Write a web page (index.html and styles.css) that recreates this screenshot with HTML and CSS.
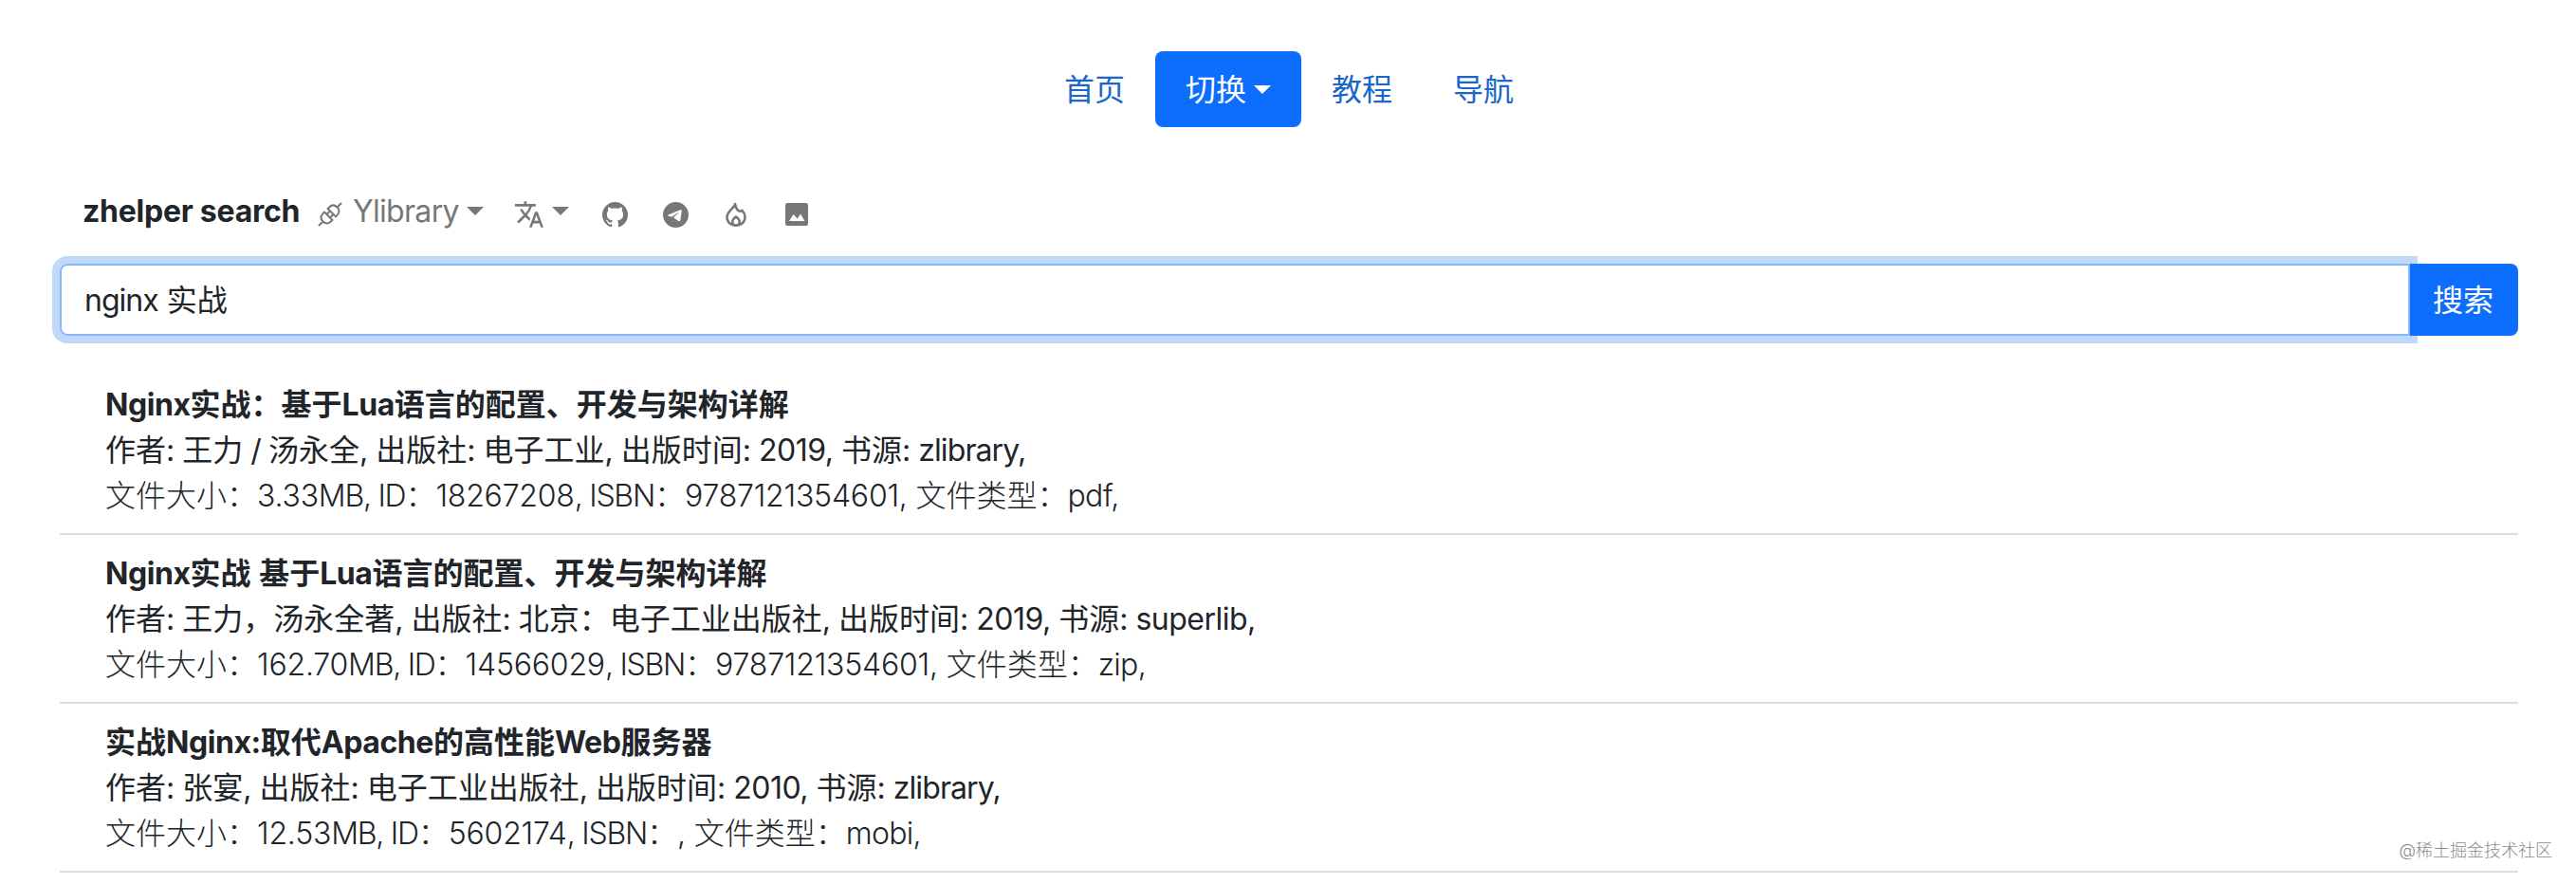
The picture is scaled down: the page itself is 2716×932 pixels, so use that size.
FILE: index.html
```html
<!DOCTYPE html>
<html lang="zh-CN">
<head>
<meta charset="utf-8">
<title>zhelper search</title>
<link rel="stylesheet" href="styles.css">
</head>
<body>
<nav class="pills">
  <a class="pill">首页</a>
  <a class="pill active">切换<i class="caret"></i></a>
  <a class="pill">教程</a>
  <a class="pill">导航</a>
</nav>
<main class="container">
  <header class="toolbar">
    <span class="brand">zhelper search</span>
    <a class="tool source">
      <svg class="icon plug" viewBox="0 0 26 26" fill="none" stroke="currentColor" stroke-width="2"><path d="M1 25l4.500-4.500M20.500 5.500L25 1M5.500 20.500c-3-3-2.200-6.200 0-8.400l1.500-1.500 8.400 8.400-1.500 1.500c-2.200 2.200-5.400 3-8.400 0zM20.500 5.500c-3-3-6.200-2.200-8.400 0l-1.500 1.500 8.400 8.400 1.500-1.500c2.200-2.200 3-5.400 0-8.400zM9.500 13l3-3M13 16.500l3-3"/></svg>
      <span class="source-name">Ylibrary</span><i class="caret"></i>
    </a>
    <a class="tool lang">
      <svg class="icon translate" viewBox="1 2 22 20" fill="currentColor"><path d="M12.870 15.070l-2.540-2.510.03-.03A17.520 17.520 0 0 0 14.070 6H17V4h-7V2H8v2H1v1.990h11.170C11.500 7.920 10.440 9.750 9 11.350 8.070 10.320 7.300 9.190 6.690 8h-2c.73 1.630 1.730 3.170 2.980 4.560l-5.090 5.020L4 19l5-5 3.110 3.110.76-2.040zM18.500 10h-2L12 22h2l1.120-3h4.750L21 22h2l-4.500-12zm-2.620 7l1.620-4.330L19.120 17h-3.240z"/></svg>
      <i class="caret"></i>
    </a>
    <a class="tool"><svg class="icon" viewBox="2 2 20 20" fill="currentColor"><path d="M12 2A10 10 0 0 0 2 12c0 4.420 2.870 8.170 6.840 9.500.5.080.66-.23.66-.5v-1.690c-2.770.6-3.360-1.340-3.360-1.340-.46-1.160-1.110-1.470-1.110-1.470-.91-.62.07-.6.07-.6 1 .07 1.530 1.030 1.530 1.030.87 1.520 2.340 1.070 2.910.83.090-.65.35-1.090.63-1.340-2.220-.25-4.550-1.110-4.550-4.920 0-1.110.38-2 1.030-2.710-.1-.25-.45-1.290.1-2.640 0 0 .84-.27 2.750 1.020.79-.22 1.650-.33 2.500-.33s1.710.11 2.500.33c1.910-1.290 2.750-1.020 2.750-1.020.55 1.350.2 2.390.1 2.640.65.710 1.030 1.600 1.030 2.710 0 3.820-2.340 4.660-4.570 4.910.36.31.69.92.69 1.850V21c0 .27.16.59.67.5C19.140 20.160 22 16.420 22 12A10 10 0 0 0 12 2z"/></svg></a>
    <a class="tool"><svg class="icon" viewBox="2 2 20 20" fill="currentColor"><path d="M12 2C6.480 2 2 6.480 2 12s4.480 10 10 10 10-4.480 10-10S17.520 2 12 2zm4.640 6.800c-.15 1.580-.8 5.420-1.130 7.190-.14.75-.42 1-.68 1.030-.58.050-1.020-.38-1.580-.75-.88-.58-1.380-.94-2.230-1.500-.99-.65-.35-1.010.22-1.590.15-.15 2.710-2.480 2.760-2.690.01-.03.01-.13-.05-.18s-.15-.03-.22-.02c-.09.020-1.500.95-4.230 2.790-.4.280-.76.410-1.080.4-.36-.01-1.040-.2-1.550-.37-.63-.2-1.120-.31-1.080-.66.020-.18.270-.36.740-.55 2.920-1.270 4.860-2.110 5.830-2.510 2.780-1.160 3.350-1.360 3.730-1.360.08 0 .27.020.39.120.1.080.13.190.14.270-.01.060.01.240 0 .38z"/></svg></a>
    <a class="tool"><svg class="icon fire" viewBox="0 0 22 26" fill="none" stroke="currentColor" stroke-width="2.500" stroke-linejoin="round"><path d="M10 2C9.500 6.500 1.500 9.500 1.500 16c0 5 4 8.700 9.500 8.700s9.500-3.700 9.500-8.700c0-3-1.200-5.200-3-7.300-1.200 1.200-2.500 1.300-4 .3C11.500 7.500 10.500 5 10 2z"/><path d="M11 15.500c-1.700 1.300-3.700 2.800-3.700 5.200 0 2.200 1.600 4 3.700 4s3.700-1.800 3.700-4c0-2.400-2-3.900-3.700-5.200z"/></svg></a>
    <a class="tool"><svg class="icon image" viewBox="0 0 24 24" fill="currentColor"><path fill-rule="evenodd" d="M2.500 0h19A2.500 2.500 0 0 1 24 2.500v19a2.500 2.500 0 0 1-2.500 2.500h-19A2.500 2.500 0 0 1 0 21.500v-19A2.500 2.500 0 0 1 2.500 0zM4 19h16.500L16 11.500l-3.200 5-4.300-4.500z"/></svg></a>
  </header>
  <form class="search">
    <div class="field"><span class="query">nginx</span> 实战</div>
    <div class="submit">搜索</div>
  </form>
  <section class="results">
    <article class="book">
      <h2 class="title"><span>Nginx</span>实战：基于<span>Lua</span>语言的配置、开发与架构详解</h2>
      <p class="meta">作者<span>: </span>王力<span class="word"> / </span>汤永全<span>, </span>出版社<span>: </span>电子工业<span>, </span>出版时间<span>: 2019, </span>书源<span>: </span><span class="word">zlibrary,</span></p>
      <p class="file">文件大小：<span>3.33</span><b>MB, ID</b>：<span>18267208</span><b>, ISBN</b>：<span>9787121354601, </span>文件类型：<em>pdf,</em></p>
    </article>
    <article class="book">
      <h2 class="title"><span>Nginx</span>实战<span class="gap"> </span>基于<span>Lua</span>语言的配置、开发与架构详解</h2>
      <p class="meta">作者<span>: </span>王力，汤永全著<span>, </span>出版社<span>: </span>北京：电子工业出版社<span>, </span>出版时间<span>: 2019, </span>书源<span>: </span><span>superlib,</span></p>
      <p class="file">文件大小：<span>162.70</span><b>MB, ID</b>：<span>14566029</span><b>, ISBN</b>：<span>9787121354601, </span>文件类型：<em>zip,</em></p>
    </article>
    <article class="book">
      <h2 class="title">实战<span>Nginx:</span>取代<span>Apache</span>的高性能<span>Web</span>服务器</h2>
      <p class="meta">作者<span>: </span>张宴<span>, </span>出版社<span>: </span>电子工业出版社<span>, </span>出版时间<span>: 2010, </span>书源<span>: </span><span class="word">zlibrary,</span></p>
      <p class="file">文件大小：<span>12.53</span><b>MB, ID</b>：<span>5602174</span><b>, ISBN</b>：<span>, </span>文件类型：<em>mobi,</em></p>
    </article>
  </section>
</main>
<div class="watermark">@稀土掘金技术社区</div>
</body>
</html>
```

FILE: styles.css
```css
* { box-sizing: border-box; }
body {
  margin: 0;
  height: 932px;
  overflow: hidden;
  background: #fff;
  color: #212529;
  font: 400 32px/48px Inter, "Noto Sans CJK SC", sans-serif;
}
.pills {
  display: flex;
  justify-content: center;
  padding: 54px 0 0 2px;
  height: 134px;
}
.pill {
  display: flex;
  align-items: center;
  padding: 17px 32px 15px;
  height: 80px;
  border-radius: 8px;
  color: #1a66cc;
}
.pill.active { background: #0d6efd; color: #fff; }
.caret {
  width: 0;
  height: 0;
  margin: 0 0 2px 8px;
  border: 9px solid transparent;
  border-top-color: currentColor;
  border-bottom: 0;
}
.container { padding: 64px 61px 0 63px; }
.toolbar {
  display: flex;
  align-items: center;
  height: 48px;
  padding: 2px 0 0 24px;
  color: #777;
}
.brand {
  width: 248px;
  color: #212529;
  font-weight: 700;
  white-space: nowrap;
  letter-spacing: -0.25px;
}
.tool { display: flex; align-items: center; justify-content: center; width: 64px; }
.source { justify-content: flex-start; width: 208px; }
.source-name { width: 111px; margin-left: 11px; margin-right: 1px; letter-spacing: -0.7px; }
.lang { justify-content: flex-start; width: 73px; }
.icon { display: block; flex: none; width: 27px; height: 27px; margin-top: 6px; }
.icon.plug { width: 26px; height: 26px; }
.icon.translate { width: 30px; height: 28px; }
.lang .caret { margin-left: 9px; }
.icon.fire { width: 22px; height: 26px; }
.icon.image { width: 24px; height: 24px; }
.search { display: flex; margin: 32px 0; height: 76px; }
.field {
  flex: 1;
  padding: 13px 24px 11px;
  border: 2px solid #86b7fe;
  border-radius: 8px 0 0 8px;
  box-shadow: 0 0 0 8px #c2d8fb;
}
.query { letter-spacing: -1px; }
.submit {
  position: relative;
  width: 116px;
  margin-left: -2px;
  border-left: 2px solid #86b7fe;
  padding: 15px 24px 13px;
  border-radius: 0 8px 8px 0;
  background: #0d6efd;
  color: #fff;
}
.book {
  height: 178px;
  padding: 17px 48px 15px;
  border-bottom: 2px solid #dcdddd;
  white-space: nowrap;
}
.title, .meta, .file { margin: 0; font-size: 32px; font-weight: 400; }
.title { font-weight: 700; }
.title span { letter-spacing: -0.45px; }
.title .gap { letter-spacing: 1px; }
.meta span { letter-spacing: -0.5px; }
.meta .word { letter-spacing: -0.9px; }
.file { font-weight: 300; }
.file span { letter-spacing: -0.2px; }
.file b { font-weight: 300; letter-spacing: -1.25px; }
.file em { font-style: normal; letter-spacing: -0.7px; }
.watermark {
  position: absolute;
  right: 25px;
  bottom: 21px;
  color: #8b8b8b;
  font-size: 18px;
  font-weight: 300;
  line-height: 28px;
}
```
